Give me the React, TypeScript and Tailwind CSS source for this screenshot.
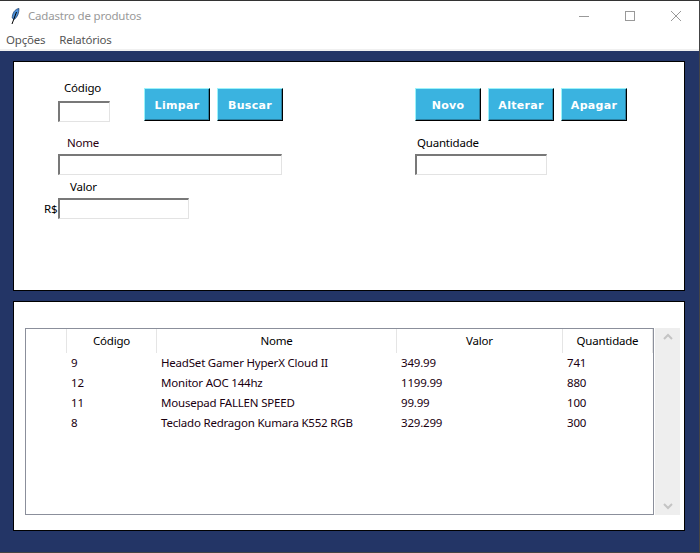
const ui = { fontFamily: '"Noto Sans", "Open Sans", sans-serif' };

const rows = [
  { id: "9", nome: "HeadSet Gamer HyperX Cloud II", valor: "349.99", qtd: "741" },
  { id: "12", nome: "Monitor AOC 144hz", valor: "1199.99", qtd: "880" },
  { id: "11", nome: "Mousepad FALLEN SPEED", valor: "99.99", qtd: "100" },
  { id: "8", nome: "Teclado Redragon Kumara K552 RGB", valor: "329.299", qtd: "300" },
];

function Feather() {
  return (
    <svg width="10" height="17" viewBox="0 0 10 17" className="ml-[10px] mt-[1px] shrink-0">
      <path d="M9 0.5 C5 1 2.2 5 2.2 10 L4 11.5 C7.5 9.5 9 5 9 0.5 Z" fill="#4a8fd8" stroke="#1c3a66" strokeWidth="0.7" />
      <path d="M6.5 4 L2 16" stroke="#000" strokeWidth="1" fill="none" />
    </svg>
  );
}

function Entry({ className }: { className: string }) {
  return <div className={`h-[21px] border-t-2 border-l-2 border-r border-b border-t-[#787878] border-l-[#787878] border-r-[#e3e3e3] border-b-[#e3e3e3] bg-white ${className}`} />;
}

function TkButton({ label }: { label: string }) {
  return (
    <button
      className="flex h-[33px] w-[66px] items-center justify-center border border-t-[#9af3fb] border-l-[#9af3fb] border-r-black border-b-black bg-[#3ab3e0] pt-[3px] text-[11px] font-bold tracking-[0.3px] text-white shadow-[inset_-1px_-1px_0_#2a7fa0]"
      style={{ fontFamily: '"DejaVu Sans", sans-serif' }}
    >
      {label}
    </button>
  );
}

export default function App() {
  return (
    <div className="flex h-[553px] w-[700px] flex-col overflow-hidden border-r border-r-[#444] bg-[#233566] text-[11.5px] tracking-[-0.2px] text-black" style={ui}>
      {/* title bar */}
      <div className="flex h-[30px] shrink-0 items-center border-t border-t-[#333] bg-white">
        <Feather />
        <span className="ml-[8px] text-[#999]">Cadastro de produtos</span>
        <div className="ml-auto flex items-center">
          <svg width="12" height="12" viewBox="0 0 12 12" className="mr-[34px]"><path d="M1 6.5H11" stroke="#999" /></svg>
          <svg width="12" height="12" viewBox="0 0 12 12" className="mr-[34px]"><rect x="1.5" y="1.5" width="9" height="9" fill="none" stroke="#999" /></svg>
          <svg width="12" height="12" viewBox="0 0 12 12" className="mr-[17px]"><path d="M1 1L11 11M11 1L1 11" stroke="#999" /></svg>
        </div>
      </div>
      {/* menu */}
      <div className="flex h-[19px] shrink-0 items-center gap-[14px] bg-white pl-[6px] pt-[1px] text-[#555]">
        <span>Opções</span>
        <span>Relatórios</span>
      </div>
      <div className="h-[2px] shrink-0 bg-[#f0f0f0]" />

      <div className="flex grow flex-col gap-[10px] px-[13px] pt-[10px]">
        {/* form panel */}
        <section className="h-[230px] w-[672px] shrink-0 border border-black bg-white">
          <div className="mt-[18px] flex">
            <div className="ml-[44px] w-[52px]">
              <div className="h-[21px] pl-[6px] leading-[16px]">Código</div>
              <Entry className="w-[52px]" />
            </div>
            <div className="ml-[34px] mt-[8px] flex gap-[7px]">
              <TkButton label="Limpar" />
              <TkButton label="Buscar" />
            </div>
            <div className="ml-[132px] mt-[8px] flex gap-[7px]">
              <TkButton label="Novo" />
              <TkButton label="Alterar" />
              <TkButton label="Apagar" />
            </div>
          </div>
          <div className="mt-[10px] flex">
            <div className="ml-[44px] w-[224px]">
              <div className="h-[22px] pl-[9px] leading-[22px] text-[#2a0010]">Nome</div>
              <Entry className="w-[224px]" />
            </div>
            <div className="ml-[133px] w-[132px]">
              <div className="h-[22px] pl-[2px] leading-[22px]">Quantidade</div>
              <Entry className="w-[132px]" />
            </div>
          </div>
          <div className="ml-[30px] mt-[1px] w-[160px]">
            <div className="h-[22px] pl-[26px] leading-[22px]">Valor</div>
            <div className="flex items-center">
              <span className="w-[14px]">R$</span>
              <Entry className="w-[131px]" />
            </div>
          </div>
        </section>

        {/* table panel */}
        <section className="flex h-[230px] w-[672px] shrink-0 gap-px border border-black bg-white pl-[11px] pt-[26px]">
          <div className="h-[187px] w-[629px] border border-[#8b8f9b]">
            <div className="grid h-[24px] grid-cols-[41px_90px_240px_166px_90px] items-stretch text-center">
              <div className="border-r border-r-[#e5e5e5]" />
              <div className="border-r border-r-[#e5e5e5] leading-[24px]">Código</div>
              <div className="border-r border-r-[#e5e5e5] leading-[24px]">Nome</div>
              <div className="border-r border-r-[#e5e5e5] leading-[24px]">Valor</div>
              <div className="border-r border-r-[#e5e5e5] leading-[24px]">Quantidade</div>
            </div>
            {rows.map((r) => (
              <div key={r.id} className="grid h-[20px] grid-cols-[41px_90px_240px_166px_90px] leading-[20px] text-[#1a0010]">
                <div />
                <div className="pl-[4px]">{r.id}</div>
                <div className="pl-[4px]">{r.nome}</div>
                <div className="pl-[4px]">{r.valor}</div>
                <div className="pl-[4px]">{r.qtd}</div>
              </div>
            ))}
          </div>
          <div className="flex h-[187px] w-[25px] flex-col items-center justify-between bg-[#eeeeee] py-[5px]">
            <svg width="10" height="8" viewBox="0 0 10 8"><path d="M1 6L5 2L9 6" fill="none" stroke="#c4c4c4" strokeWidth="2" /></svg>
            <svg width="10" height="8" viewBox="0 0 10 8"><path d="M1 2L5 6L9 2" fill="none" stroke="#c4c4c4" strokeWidth="2" /></svg>
          </div>
        </section>
      </div>
      <div className="h-px shrink-0 bg-[#444]" />
    </div>
  );
}
